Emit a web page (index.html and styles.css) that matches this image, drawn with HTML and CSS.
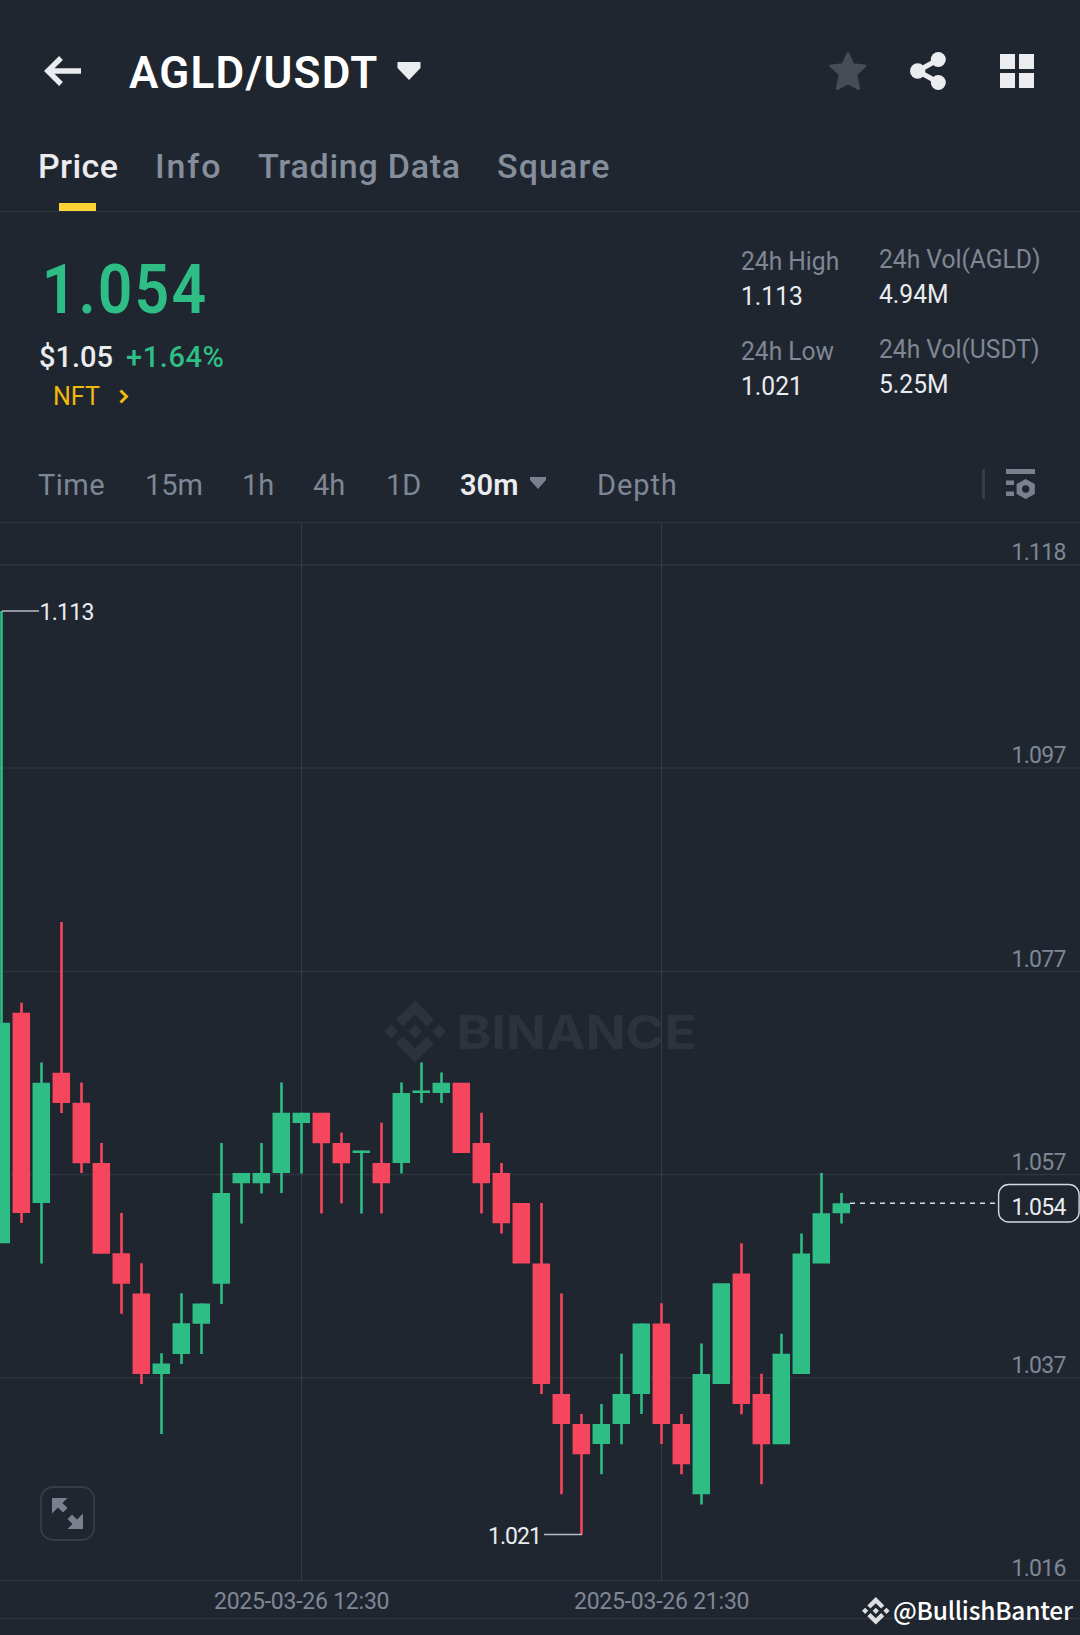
FILE: index.html
```html
<!DOCTYPE html>
<html lang="en">
<head>
<meta charset="utf-8">
<title>AGLD/USDT</title>
<link rel="stylesheet" href="styles.css">
</head>
<body>
<header class="header">
  <svg class="back" width="37" height="30" viewBox="0 0 37 30"><path d="M37 15H5M17 2 3.800 15 17 28" fill="none" stroke="currentColor" stroke-width="5.400"/></svg>
  <h1 class="pair">AGLD/USDT</h1>
  <svg class="pair-caret" width="24" height="18" viewBox="0 0 24 18"><path d="M.5 0h23v6L12 18 .5 6z" fill="currentColor"/></svg>
  <div class="actions">
    <svg class="star" width="38" height="40" viewBox="0 0 38 40"><path d="M19 2.500 23.800 13.700 36 14.900 26.800 23.300 29.500 37.500 19 31.700 8.500 37.500 11.200 23.300 2 14.900 14.200 13.700z" fill="currentColor" stroke="currentColor" stroke-width="3" stroke-linejoin="round"/></svg>
    <svg class="share" width="36" height="40" viewBox="0 0 36 40"><path d="M28.300 8.500 7.700 20l20.600 11.500" fill="none" stroke="currentColor" stroke-width="5"/><circle cx="28.300" cy="8.500" r="7.500" fill="currentColor"/><circle cx="7.700" cy="20" r="7.700" fill="currentColor"/><circle cx="28.300" cy="31.500" r="7.500" fill="currentColor"/></svg>
    <svg class="grid" width="34" height="34" viewBox="0 0 34 34"><path d="M0 0h15v15H0zM19 0h15v15H19zM0 19h15v15H0zM19 19h15v15H19z" fill="currentColor"/></svg>
  </div>
</header>

<nav class="tabs">
  <a class="tab tab-active">Price</a>
  <a class="tab tab-info">Info</a>
  <a class="tab tab-data">Trading Data</a>
  <a class="tab tab-square">Square</a>
</nav>

<section class="ticker">
  <div class="quote">
    <div class="last">1.054</div>
    <div class="fiat"><span class="usd">$1.05</span><span class="change">+1.64%</span></div>
    <div class="tag">NFT<svg width="10" height="15" viewBox="0 0 10 15"><path d="m1.500 1.500 6 6-6 6" fill="none" stroke="currentColor" stroke-width="3"/></svg></div>
  </div>
  <dl class="stats">
    <div class="stat"><dt>24h High</dt><dd>1.113</dd></div>
    <div class="stat"><dt>24h Low</dt><dd>1.021</dd></div>
  </dl>
  <dl class="stats stats-vol">
    <div class="stat"><dt>24h Vol(AGLD)</dt><dd>4.94M</dd></div>
    <div class="stat"><dt>24h Vol(USDT)</dt><dd>5.25M</dd></div>
  </dl>
</section>

<nav class="frames">
  <span class="time">Time</span>
  <span>15m</span>
  <span>1h</span>
  <span>4h</span>
  <span>1D</span>
  <span class="frame-active">30m<svg width="16" height="12" viewBox="0 0 16 12"><path d="M0 0h16v3L8 12 0 3z" fill="currentColor"/></svg></span>
  <span class="depth">Depth</span>
  <i class="divider"></i>
  <svg class="settings" width="30" height="31" viewBox="0 0 30 31"><path d="M0 0h29v5H0zM0 11.500h8V16H0zM0 22.500h8V27H0z" fill="currentColor"/><path d="M19.700 10 28.800 15v10l-9.100 5-9.100-5V15z" fill="currentColor"/><circle cx="19.700" cy="20" r="3.700" fill="#202630"/></svg>
</nav>

<svg class="chart" width="1080" height="1112" viewBox="0 523 1080 1112">
  <path class="grid-line" d="M0 565h1080M0 768h1080M0 971.500h1080M0 1174.500h1080M0 1377.700h1080M0 1580.500h1080M0 1618.500h1080"/>
  <path class="grid-line grid-vertical" d="M301.500 523v1057M661.500 523v1057"/>

  <g class="watermark">
    <path transform="translate(384 1000.500) scale(2.580)" d="M16.624 13.920l2.718 2.715-7.353 7.353-7.353-7.352 2.717-2.716 4.636 4.659 4.636-4.659zm4.637-4.636L24 12l-2.715 2.716L18.568 12l2.693-2.716zm-9.272 0l2.716 2.692-2.716 2.717L9.272 12l2.716-2.715zm-9.273 0L5.409 12l-2.692 2.692L0 12l2.716-2.716zM11.989.011l7.353 7.329-2.718 2.716-4.635-4.636-4.636 4.660-2.717-2.716 7.353-7.353z"/>
    <text x="456.500" y="1049" textLength="240" lengthAdjust="spacingAndGlyphs">BINANCE</text>
  </g>

  <path class="wick up" d="M1.500 611V1243M41.500 1062.500V1263.500M161.500 1353.300V1434M181.500 1293.300V1364M201.500 1303.500V1354M221.500 1143V1304M241.500 1173V1223.500M261.500 1143V1193.500M281.500 1082.500V1193M301.500 1112.700V1173.500M361.500 1150.500V1213.500M401.500 1082.500V1173.500M421.500 1062.500V1103M441.500 1072.500V1103M601.500 1404V1474.300M621.500 1353.700V1444.300M641.500 1323.500V1414M701.500 1343.500V1504.500M781.500 1333.700V1444M801.500 1233.500V1374M821.500 1173V1263M841.500 1193V1223.500"/>
  <path class="wick down" d="M21.500 1002.700V1223M61.500 922V1113M81.500 1082.500V1173M101.500 1143V1253M121.500 1213V1313.700M141.500 1263.300V1384M321.500 1113V1213.500M341.500 1132.700V1203.300M381.500 1122.700V1213.500M481.500 1112.700V1213.500M501.500 1163V1233.500M541.500 1203V1394M561.500 1293.500V1494.300M581.500 1414V1534.500M661.500 1303.300V1444M681.500 1414V1474.300M741.500 1243.300V1414.300M761.500 1373.700V1484.300"/>
  <path class="body up" d="M1.300 1022.700V1243.300M41.300 1082.700V1203M161.300 1363.500V1374M181.300 1323.300V1354M201.300 1303.500V1323.700M221.300 1193V1283.700M241.300 1173V1183.300M261.300 1173V1183.300M281.300 1112.700V1173M301.300 1112.700V1123M361.300 1150.500V1153M401.300 1093V1163M421.300 1090.500V1093M441.300 1082.700V1093M601.300 1424V1444M621.300 1394V1424M641.300 1323.500V1394M701.300 1374V1494.300M721.300 1283.300V1384M781.300 1353.700V1444.300M801.300 1253.500V1374M821.300 1213.300V1263.500M841.300 1203.300V1213.300"/>
  <path class="body down" d="M21.300 1012.700V1213M61.300 1072.700V1103M81.300 1102.700V1163.300M101.300 1163V1253.700M121.300 1253.300V1283.700M141.300 1293.500V1374M321.300 1112.700V1143.300M341.300 1143V1163.300M381.300 1163V1183.300M461.300 1082.700V1153M481.300 1143V1183.300M501.300 1173V1223.300M521.300 1203V1263.500M541.300 1263.500V1384M561.300 1394V1424M581.300 1424V1454.300M661.300 1323.500V1424M681.300 1424V1464.300M741.300 1273.500V1404M761.300 1394V1444.300"/>

  <path class="leader" d="M2 611H39M544 1534.500H582"/>
  <g class="extreme">
    <text x="39.500" y="619.700" textLength="55">1.113</text>
    <text x="488" y="1543.700" textLength="54">1.021</text>
  </g>

  <g class="axis">
    <text x="1011.500" y="560" textLength="55">1.118</text>
    <text x="1011.500" y="763" textLength="55">1.097</text>
    <text x="1011.500" y="966.500" textLength="55">1.077</text>
    <text x="1011.500" y="1169.700" textLength="55">1.057</text>
    <text x="1011.500" y="1373" textLength="55">1.037</text>
    <text x="1011.500" y="1576" textLength="55">1.016</text>
    <text x="214" y="1608.700" textLength="175.500">2025-03-26 12:30</text>
    <text x="574" y="1608.700" textLength="175.500">2025-03-26 21:30</text>
  </g>

  <path class="last-line" d="M850 1203.300H996"/>
  <rect class="last-box" x="998.600" y="1184.500" width="80.500" height="37.500" rx="10"/>
  <text class="last-text" x="1011.500" y="1215" textLength="55">1.054</text>

  <g class="expand">
    <rect x="41" y="1487" width="53" height="53" rx="12"/>
    <path d="M52 1498h15.500l-5 5 5 5-4.500 4.500-5-5-6 6zM83 1529H67.500l5-5-5-5 4.500-4.500 5 5 6-6z"/>
  </g>

  <g class="author">
    <path transform="translate(862 1597) scale(1.150)" d="M16.624 13.920l2.718 2.715-7.353 7.353-7.353-7.352 2.717-2.716 4.636 4.659 4.636-4.659zm4.637-4.636L24 12l-2.715 2.716L18.568 12l2.693-2.716zm-9.272 0l2.716 2.692-2.716 2.717L9.272 12l2.716-2.715zm-9.273 0L5.409 12l-2.692 2.692L0 12l2.716-2.716zM11.989.011l7.353 7.329-2.718 2.716-4.635-4.636-4.636 4.660-2.717-2.716 7.353-7.353z"/>
    <text x="893" y="1620" textLength="180">@BullishBanter</text>
  </g>
</svg>
</body>
</html>
```
FILE: styles.css
```css
* { box-sizing: border-box; }
body {
  margin: 0;
  width: 1080px;
  height: 1635px;
  overflow: hidden;
  background: #202630;
  color: #eaecef;
  font-family: Roboto, "Liberation Sans", sans-serif;
}
svg { display: block; flex: none; }

.header {
  display: flex;
  align-items: center;
  height: 120px;
  padding: 22px 46px 0 44px;
}
.pair {
  margin: 3px 0 0 48px;
  width: 268px;
  font-size: 44px;
  line-height: 52px;
  font-weight: 600;
  letter-spacing: 1.25px;
  color: #fff;
}
.pair-caret { margin-top: -1px; }
.actions { display: flex; align-items: center; margin-left: auto; }
.star { color: #474d57; margin: 0 43px 0 0; }
.share { margin-right: 54px; }

.tabs {
  display: grid;
  grid-template-columns: 117px 103px 239px auto;
  height: 92px;
  padding-left: 38px;
  border-bottom: 1px solid #2e353f;
}
.tab {
  position: relative;
  font-size: 34px;
  line-height: 92px;
  font-weight: 500;
  letter-spacing: 0.4px;
  color: #848e9c;
  white-space: nowrap;
}
.tab-info { letter-spacing: 1.9px; }
.tab-data { letter-spacing: 0.75px; }
.tab-square { letter-spacing: 1.1px; }
.tab-active { color: #eaecef; }
.tab-active::after {
  content: "";
  position: absolute;
  left: 21px;
  bottom: 1px;
  width: 37px;
  height: 8px;
  background: #fcd535;
}

.ticker { display: flex; height: 238px; padding-top: 38px; }
.quote { flex: none; width: 741px; padding-left: 39px; }
.last {
  padding-left: 3px;
  font-size: 69px;
  line-height: 80px;
  font-weight: 600;
  letter-spacing: 2.4px;
  transform: scaleX(0.88);
  transform-origin: left;
  color: #2ebd85;
}
.fiat { display: flex; font-size: 29px; line-height: 54px; font-weight: 500; }
.usd { width: 87px; }
.change { color: #2ebd85; letter-spacing: 0.6px; }
.tag {
  display: flex;
  align-items: center;
  gap: 19px;
  padding-left: 14px;
  font-size: 25px;
  line-height: 26px;
  color: #f0b90b;
}
.tag svg { margin-top: -2px; }
.stats {
  display: grid;
  grid-template-rows: 70px 70px;
  row-gap: 20px;
  flex: none;
  width: 138px;
  margin: -6px 0 0;
  font-size: 26px;
  line-height: 35px;
  transform: scaleX(0.946);
  transform-origin: left;
}
.stats-vol { margin-top: -8px; width: 200px; }
.stat dt { color: #7f8694; white-space: nowrap; }
.stat dd { margin: 0; }

.frames {
  display: grid;
  grid-template-columns: 107px 97px 71px 73px 74px 137px 385px 24px 30px;
  height: 73px;
  padding-left: 38px;
  border-bottom: 1px solid #2e353f;
  font-size: 29px;
  line-height: 71px;
  color: #7f8694;
}
.time { letter-spacing: 0.5px; }
.frame-active {
  display: flex;
  align-items: center;
  height: 71px;
  font-weight: 600;
  color: #eaecef;
}
.frame-active svg { margin: -5px 0 0 12px; color: #7a808d; }
.depth { letter-spacing: 0.9px; }
.divider { width: 3px; height: 30px; margin-top: 19px; background: #363d48; }
.settings { margin: 19px 0 0; color: #7a808d; }

.grid-line { fill: none; stroke: #2e353f; stroke-width: 1.5; }
.grid-vertical { stroke: #353c47; stroke-width: 1; }
.watermark { fill: #2c333d; font: 700 47px Inter, sans-serif; }
.up { stroke: #2ebd85; }
.down { stroke: #f6465d; }
.wick { stroke-width: 2.6; }
.body { stroke-width: 17.5; }
.leader { stroke: #b7bdc6; stroke-width: 1.6; }
.extreme, .last-text { fill: #eaecef; font-size: 23px; }
.axis { fill: #7f8694; font-size: 23px; }
.last-line { stroke: #d5d9df; stroke-width: 1.5; stroke-dasharray: 5 5; }
.last-box { fill: #202630; stroke: #d5d9df; stroke-width: 1.4; }
.expand rect { fill: none; stroke: #363d48; stroke-width: 1.8; }
.expand path { fill: #7a808d; }
.author { fill: #dcdee1; }
.author text { fill: #fff; font: 500 24.5px "Noto Sans CJK SC", sans-serif; }
```
